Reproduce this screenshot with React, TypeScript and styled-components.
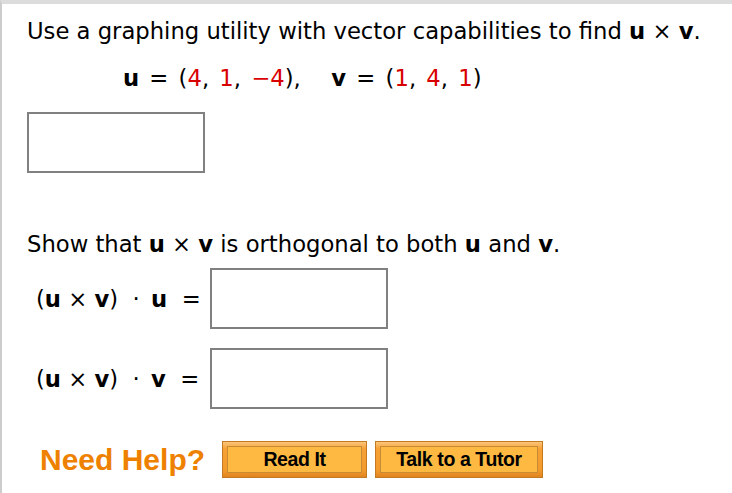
import React from 'react';
import styled, { createGlobalStyle } from 'styled-components';

const GlobalStyle = createGlobalStyle`
  html, body {
    margin: 0;
    padding: 0;
    background: #ffffff;
  }
`;

const Page = styled.div`
  box-sizing: border-box;
  width: 732px;
  height: 493px;
  border-top: 4px solid #dcdcdc;
  border-left: 2px solid #cccccc;
  padding: 13px 0 0 25px;
  font-family: Verdana, "DejaVu Sans", sans-serif;
  font-size: 22.7px;
  color: #000;
`;

const Prompt = styled.p`
  margin: 0;
  line-height: 28px;
`;

const Vectors = styled.div`
  margin: 19px 0 0 96px;
  line-height: 28px;
  white-space: pre;
  word-spacing: 3px;
`;

const Num = styled.span`
  color: #d80000;
`;

const B = styled.b`
  font-weight: bold;
`;

const AnswerBox = styled.div<{ $width?: number }>`
  box-sizing: border-box;
  width: ${(p) => p.$width ?? 178}px;
  height: 61px;
  border: 2px solid #808080;
  background: #fff;
`;

const FirstBox = styled.div`
  margin-top: 20px;
`;

const ShowLine = styled.p`
  margin: 57px 0 0;
  line-height: 28px;
`;

const Rows = styled.div`
  margin-top: 10px;
  display: flex;
  flex-direction: column;
  gap: 19px;
`;

const DotRow = styled.div`
  display: flex;
  align-items: center;
`;

const DotLabel = styled.span`
  width: 183px;
  padding-left: 9px;
  box-sizing: border-box;
  white-space: pre;
`;

const HelpBar = styled.div`
  margin-top: 32px;
  padding-left: 13px;
  display: flex;
  align-items: center;
`;

const HelpTitle = styled.span`
  font-family: "Liberation Sans", Arial, sans-serif;
  font-weight: bold;
  font-size: 30px;
  line-height: 37px;
  color: #ee8100;
  margin-right: 17px;
`;

const HelpButton = styled.button<{ $width: number }>`
  box-sizing: border-box;
  width: ${(p) => p.$width}px;
  height: 37px;
  margin-right: 8px;
  padding: 4px;
  border: 1px solid #c47a22;
  background: linear-gradient(#fbc57a 0%, #f6a035 20%, #f39a2c 80%, #e08420 100%);
  cursor: pointer;
  display: flex;
  span {
    flex: 1;
    display: flex;
    align-items: center;
    justify-content: center;
    border: 1px solid #c78a35;
    background: #fdb942;
    font-family: "Liberation Sans", Arial, sans-serif;
    font-weight: bold;
    font-size: 19.5px;
    color: #000;
    letter-spacing: -0.4px;
  }
`;

const App: React.FC = () => (
  <>
    <GlobalStyle />
    <Page>
      <Prompt>
        Use a graphing utility with vector capabilities to find <B>u</B> × <B>v</B>.
      </Prompt>
      <Vectors>
        <B>u</B> = (<Num>4</Num>, <Num>1</Num>, <Num>−4</Num>),   <B>v</B> = (<Num>1</Num>, <Num>4</Num>, <Num>1</Num>)
      </Vectors>
      <FirstBox>
        <AnswerBox />
      </FirstBox>
      <ShowLine>
        Show that <B>u</B> × <B>v</B> is orthogonal to both <B>u</B> and <B>v</B>.
      </ShowLine>
      <Rows>
        <DotRow>
          <DotLabel>
            (<B>u</B> × <B>v</B>{')  ·\u2002'}<B>u</B>{'  ='}
          </DotLabel>
          <AnswerBox />
        </DotRow>
        <DotRow>
          <DotLabel>
            (<B>u</B> × <B>v</B>{')  ·\u2002'}<B>v</B>{'  ='}
          </DotLabel>
          <AnswerBox />
        </DotRow>
      </Rows>
      <HelpBar>
        <HelpTitle>Need Help?</HelpTitle>
        <HelpButton $width={145}>
          <span>Read It</span>
        </HelpButton>
        <HelpButton $width={168}>
          <span>Talk to a Tutor</span>
        </HelpButton>
      </HelpBar>
    </Page>
  </>
);

export default App;
